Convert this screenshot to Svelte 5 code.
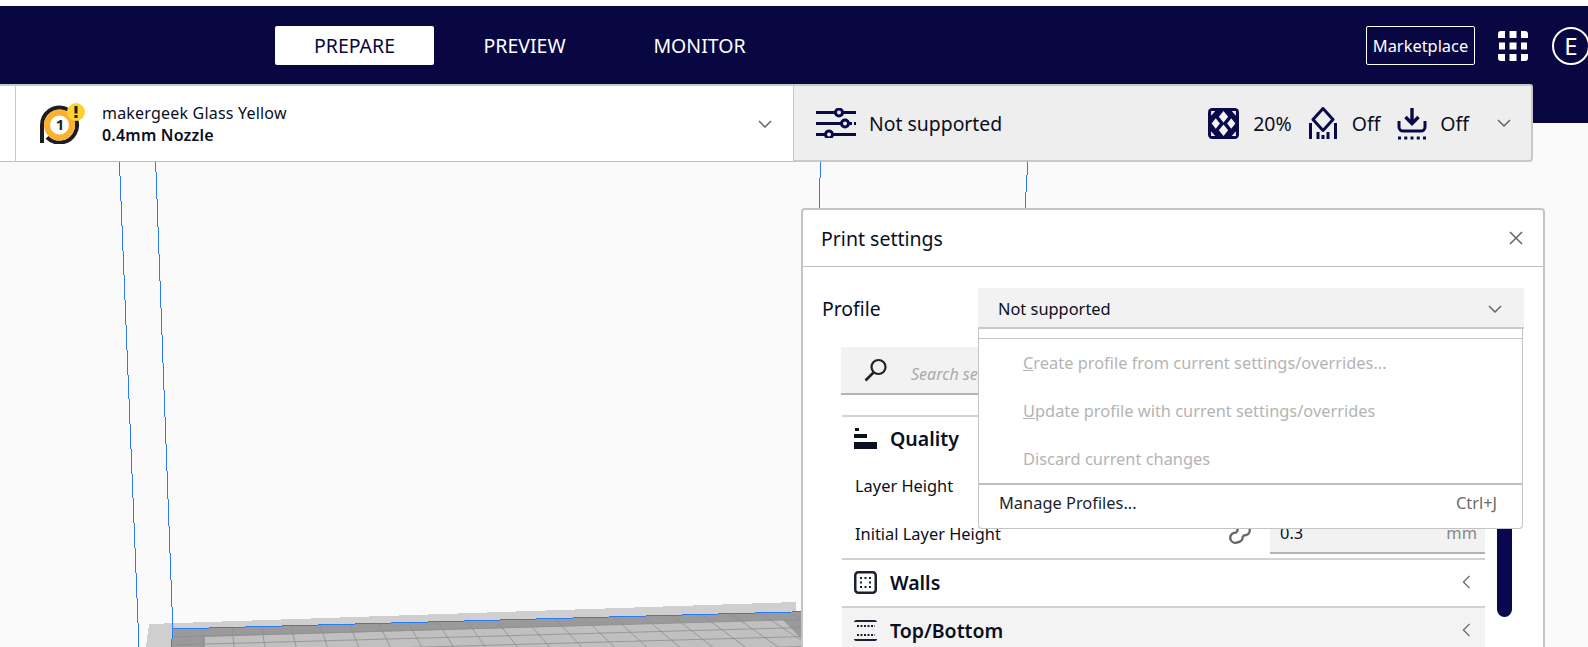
<script>
  const slope = -0.0277;
  const edgeY = (x) => 629 + (x - 172) * slope;
  const cols = Array.from({ length: 22 }, (_, i) => 203 + i * 29.3);
  const rows = [8, 16, 25, 35, 46, 58];
  const colPath = cols
    .map((x) => {
      const y = edgeY(x);
      const dy = 60;
      return `M${x} ${y}L${x + (x - 200) * 0.0027 * dy} ${y + dy}`;
    })
    .join('');
  const rowPath = rows
    .map((o) => `M172 ${629 + o}L830 ${629 + o + 658 * slope}`)
    .join('');
  const categories = [
    { name: 'Walls', shaded: false },
    { name: 'Top/Bottom', shaded: true }
  ];
</script>

<div class="app">
  <svg class="scene" viewBox="0 0 1588 647" width="1588" height="647" aria-hidden="true">
    <polygon class="rim" points="149,624 796,602 796,612 172,629 172,647 146,647" />
    <polygon class="band" points="172,629 810,611.5 810,647 172,647" />
    <polygon class="plate" points="205,637 783,620 812,650 205,650" />
    <path class="grid" d={rowPath} />
    <path class="grid" d={colPath} />
    <path class="ray" d="M119.4 161L139 647M155.6 161L172.8 629L171.4 647M172.8 629L810 611.5M820.6 161L819 209M1027.8 161L1025 209" />
  </svg>

  <header class="nav">
    <div class="tabs">
      <span class="tab active">PREPARE</span>
      <span class="tab">PREVIEW</span>
      <span class="tab last">MONITOR</span>
    </div>
    <div class="nav-right">
      <span class="market">Marketplace</span>
      <svg class="apps" viewBox="0 0 30 30" width="30" height="30" fill="#fff" aria-hidden="true">
        <path d="M3 0h4v7H0V3a3 3 0 0 1 3-3zM11.500 0h7v7h-7zM23 0h4a3 3 0 0 1 3 3v4h-7zM1 11.500h6v7H1zM11.500 11.500h7v7h-7zM23 11.500h6v7h-6zM0 23h7v7H3a3 3 0 0 1-3-3zM11.500 23h7v7h-7zM23 23h7v4a3 3 0 0 1-3 3h-4z" />
      </svg>
      <span class="avatar">E</span>
    </div>
  </header>

  <div class="toolbar">
    <div class="material">
      <div class="mat-inner">
        <div class="extruder">
          <svg viewBox="0 0 46 41" width="46" height="41" aria-hidden="true">
            <path d="M2 40V22a17.500 17.500 0 1 1 5 12.300" fill="none" stroke="#1d1d1d" stroke-width="4" />
            <circle cx="19.500" cy="22" r="12.500" fill="#fff" stroke="#fbb130" stroke-width="6" />
            <circle cx="36" cy="9" r="9" fill="#fed330" />
            <rect x="34.500" y="3" width="3" height="7.500" fill="#1d1d1d" />
            <rect x="34.500" y="12" width="3" height="3" fill="#1d1d1d" />
          </svg>
          <span class="ext-num">1</span>
        </div>
        <div class="mat-text">
          <span>makergeek Glass Yellow</span>
          <strong>0.4mm Nozzle</strong>
        </div>
        <svg class="chev" viewBox="0 0 14 8" width="14" height="8" aria-hidden="true"><path d="M1 1l6 6 6-6" /></svg>
      </div>
    </div>
    <div class="print">
      <svg class="sliders" viewBox="0 0 40 30" width="40" height="30" aria-hidden="true">
        <path d="M0 4.500h19M27 4.500h13M0 15.500h25M33 15.500h3M38 15.500h2M0 26.500h9M17 26.500h23" />
        <circle cx="23" cy="4.500" r="3.500" /><circle cx="29" cy="15.500" r="3.500" /><circle cx="13" cy="26.500" r="3.500" />
      </svg>
      <span class="print-name">Not supported</span>
      <svg class="ic-infill" viewBox="0 0 30 30" width="31" height="31" aria-hidden="true">
        <rect width="30" height="30" rx="4" fill="#0a0a4a" />
        <path fill="#f2f2f5" d="M15 3l4.500 5.500L15 14l-4.500-5.500zM15 16l4.500 5.500L15 27l-4.500-5.500zM7.500 10l4 5-4 5-4-5zM22.500 10l4 5-4 5-4-5zM3 3h4L3 7.500zM27 3v4.500L23 3zM3 27v-4.500L7 27zM27 27h-4l4-4.500z" />
      </svg>
      <span class="stat s1">20%</span>
      <svg class="ic-support" viewBox="0 0 30 33" width="30" height="33" aria-hidden="true">
        <path d="M15 1.500L25 12.500 15 23.500 5 12.500z" fill="none" stroke="#0a0a4a" stroke-width="3" stroke-linejoin="round" />
        <path d="M2.500 32V16M27.500 32V16M10 32v-7M20 32v-7M15 32v-4" fill="none" stroke="#0a0a4a" stroke-width="3" />
      </svg>
      <span class="stat s2">Off</span>
      <svg class="ic-adhesion" viewBox="0 0 30 33" width="30" height="33" aria-hidden="true">
        <path d="M15 1v15M8.500 10l6.500 6.500 6.500-6.500" fill="none" stroke="#0a0a4a" stroke-width="3.400" />
        <path d="M2 14v6a4 4 0 0 0 4 4h18a4 4 0 0 0 4-4v-6" fill="none" stroke="#0a0a4a" stroke-width="3" />
        <path d="M1 31h28" fill="none" stroke="#0a0a4a" stroke-width="3" stroke-dasharray="3 3.250" />
      </svg>
      <span class="stat s3">Off</span>
      <svg class="chev print-chev" viewBox="0 0 14 8" width="14" height="8" aria-hidden="true"><path d="M1 1l6 6 6-6" /></svg>
    </div>
  </div>

  <section class="panel">
    <div class="panel-head">
      <span>Print settings</span>
      <svg class="close" viewBox="0 0 14 14" width="14" height="14" aria-hidden="true"><path d="M1 1l12 12M13 1L1 13" /></svg>
    </div>

    <div class="profile-row">
      <span class="profile-label">Profile</span>
      <div class="combo">
        <span>Not supported</span>
        <svg class="chev combo-chev" viewBox="0 0 14 8" width="14" height="8" aria-hidden="true"><path d="M1 1l6 6 6-6" /></svg>
      </div>
    </div>

    <div class="search">
      <svg viewBox="0 0 26 26" width="26" height="26" aria-hidden="true">
        <circle cx="15.500" cy="10" r="7" fill="none" stroke="#222" stroke-width="2.200" />
        <path d="M10.500 15.500L2.500 23.500" stroke="#222" stroke-width="2.600" />
      </svg>
      <span>Search settings</span>
    </div>

    <div class="scroller">
      <div class="list">
        <div class="cat first">
          <svg viewBox="0 0 23 21" width="23" height="21" aria-hidden="true">
            <path fill="#0b1020" d="M1 0h4v3H1zM0 6h13v4H0zM0 14h23v7H0z" />
          </svg>
          <strong>Quality</strong>
        </div>
        <div class="row"><span>Layer Height</span></div>
        <div class="row">
          <span>Initial Layer Height</span>
          <svg class="link" viewBox="0 0 24 20" width="24" height="20" aria-hidden="true">
            <path d="M10 7.500H6.500a5 5 0 0 0 0 10H9a5 5 0 0 0 5-5M14 12.500h3.500a5 5 0 0 0 0-10H15a5 5 0 0 0-5 5" transform="rotate(-14 12 10)" />
          </svg>
          <div class="field"><span>0.3</span><span class="unit">mm</span></div>
        </div>
        {#each categories as cat, i}
          <div class="cat" class:shaded={cat.shaded}>
            {#if i === 0}
              <svg viewBox="0 0 23 23" width="23" height="23" aria-hidden="true">
                <rect x="1.250" y="1.250" width="20.500" height="20.500" rx="3" fill="none" stroke="#1a2030" stroke-width="2.500" />
                <path d="M6 7h2M10.500 7h2M15 7h2M6 11.500h2M15 11.500h2M6 16h2M10.500 16h2M15 16h2" stroke="#1a2030" stroke-width="2" />
              </svg>
            {:else}
              <svg viewBox="0 0 23 23" width="23" height="23" aria-hidden="true">
                <path d="M0 3a3 2 0 0 1 3-2h17a3 2 0 0 1 3 2zM0 20h23a3 2 0 0 1-3 2H3a3 2 0 0 1-3-2z" fill="#1a2030" />
                <path d="M3 7h18M3 16h18" stroke="#1a2030" stroke-width="2" stroke-dasharray="2 1.500" />
              </svg>
            {/if}
            <strong>{cat.name}</strong>
            <svg class="cat-chev" viewBox="0 0 9 16" width="9" height="14" aria-hidden="true"><path d="M8 1L1 8l7 7" /></svg>
          </div>
        {/each}
      </div>
      <div class="thumb"></div>
    </div>

    <div class="menu">
      <div class="menu-top"></div>
      <div class="item off first-item"><span><u>C</u>reate profile from current settings/overrides...</span></div>
      <div class="item off"><span><u>U</u>pdate profile with current settings/overrides</span></div>
      <div class="item off"><span>Discard current changes</span></div>
      <div class="manage"><span>Manage Profiles...</span><span class="shortcut">Ctrl+J</span></div>
    </div>
  </section>
</div>

<style>
  :global(body) {
    margin: 0;
  }
  .app {
    position: relative;
    width: 1588px;
    height: 647px;
    overflow: hidden;
    padding-top: 6px;
    box-sizing: border-box;
    background: linear-gradient(#fff 0 6px, #fafafa 6px);
    font-family: "Noto Sans", sans-serif;
    color: #0a0f1e;
  }
  .scene {
    position: absolute;
    inset: 0;
  }
  .rim { fill: #cfcfcf; shape-rendering: crispEdges; }
  .band { fill: #9a9a9a; }
  .plate { fill: #c0c0c0; }
  .grid { fill: none; stroke: #8f8f8f; stroke-width: 1; opacity: 0.8; }
  .ray { fill: none; stroke: #2a7cf0; stroke-width: 1; shape-rendering: crispEdges; }

  .nav {
    position: relative;
    height: 78px;
    background: #080742;
    display: flex;
    align-items: flex-start;
    justify-content: space-between;
    padding-top: 20px;
    box-sizing: border-box;
  }
  .tabs {
    display: flex;
    margin-left: 275px;
    gap: 11px;
  }
  .tab {
    width: 159px;
    height: 39px;
    display: flex;
    align-items: center;
    justify-content: center;
    font-size: 19.500px;
    color: #fff;
    border-radius: 2px;
  }
  .tab.last {
    margin-left: 5px;
  }
  .tab.active {
    background: #fff;
    color: #080742;
  }
  .nav-right {
    display: flex;
    align-items: center;
    height: 39px;
  }
  .market {
    width: 109px;
    height: 39px;
    box-sizing: border-box;
    border: 1px solid #fff;
    border-radius: 2px;
    display: flex;
    align-items: center;
    justify-content: center;
    font-size: 16.400px;
    color: #fff;
  }
  .apps {
    margin-left: 23px;
  }
  .avatar {
    margin-left: 24px;
    margin-right: -2px;
    width: 38px;
    height: 38px;
    box-sizing: border-box;
    border: 2px solid #fff;
    border-radius: 50%;
    display: flex;
    align-items: center;
    justify-content: center;
    color: #fff;
    font-size: 24px;
  }

  .toolbar {
    position: relative;
    display: flex;
    height: 78px;
  }
  .toolbar::after {
    content: "";
    position: absolute;
    left: 1500px;
    right: 0;
    top: 0;
    height: 39px;
    background: #080742;
    z-index: 0;
  }
  .material {
    width: 793px;
    box-sizing: border-box;
    background: #fff;
    border-top: 2px solid #c8c8c8;
    border-bottom: 1px solid #c0c0c0;
    padding-left: 15px;
  }
  .mat-inner {
    height: 100%;
    border-left: 1px solid #c8c8c8;
    display: flex;
    align-items: center;
    padding-left: 24px;
    padding-right: 21px;
  }
  .extruder {
    position: relative;
    width: 46px;
    height: 41px;
    margin-right: 16px;
  }
  .extruder svg {
    display: block;
  }
  .ext-num {
    position: absolute;
    left: 14px;
    top: 11px;
    width: 12px;
    text-align: center;
    font-size: 15px;
    font-weight: 700;
    line-height: 20px;
    color: #1d1d1d;
  }
  .mat-text {
    display: flex;
    flex-direction: column;
    flex: 1;
    font-size: 16px;
    letter-spacing: 0.2px;
    line-height: 22px;
    margin-top: 1px;
  }
  .mat-text strong {
    font-weight: 600;
  }
  .chev path, .close path, .cat-chev path {
    fill: none;
    stroke: #666;
    stroke-width: 1.500;
  }
  .print {
    position: relative;
    z-index: 1;
    width: 740px;
    box-sizing: border-box;
    background: #eeeeee;
    border: 2px solid #c8c8c8;
    border-left: 1px solid #c8c8c8;
    border-radius: 0 3px 4px 0;
    display: flex;
    align-items: center;
    padding-left: 22px;
  }
  .sliders path {
    fill: none;
    stroke: #0a0a4a;
    stroke-width: 3;
  }
  .sliders circle {
    fill: #eee;
    stroke: #0a0a4a;
    stroke-width: 3;
  }
  .print-name {
    margin-left: 13px;
    font-size: 19.400px;
    flex: 1;
  }
  .stat {
    font-size: 19.500px;
  }
  .s1 { margin-left: 14px; }
  .ic-support { margin-left: 16px; }
  .s2 { margin-left: 14px; }
  .ic-adhesion { margin-left: 17px; }
  .s3 { margin-left: 13px; }
  .print-chev { margin-left: 28px; margin-right: 20px; }

  .panel {
    position: relative;
    margin-left: 801px;
    margin-top: 46px;
    width: 744px;
    height: 470px;
    box-sizing: border-box;
    background: #fff;
    border: 2px solid #c4c4c4;
    border-radius: 4px;
  }
  .panel-head {
    height: 57px;
    box-sizing: border-box;
    border-bottom: 1px solid #c0c0c0;
    display: flex;
    align-items: center;
    justify-content: space-between;
    padding: 0 20px 0 18px;
    font-size: 19.500px;
  }
  .close {
    margin-top: -1px;
  }
  .profile-row {
    display: flex;
    height: 41px;
    margin-top: 21px;
    padding-left: 19px;
    padding-right: 19px;
  }
  .profile-label {
    width: 156px;
    height: 41px;
    font-size: 19.400px;
    line-height: 42px;
  }
  .combo {
    flex: 1;
    height: 41px;
    box-sizing: border-box;
    background: #f2f2f2;
    border-bottom: 2px solid #c8c8c8;
    display: flex;
    align-items: center;
    justify-content: space-between;
    padding: 2px 22px 0 20px;
    font-size: 16.400px;
  }
  .search {
    margin: 18px 58px 0 38px;
    height: 48px;
    box-sizing: border-box;
    background: #f2f2f2;
    border-bottom: 2px solid #b4b4b4;
    display: flex;
    align-items: center;
    padding-left: 22px;
    font-size: 16px;
    font-style: italic;
    color: #aaa;
  }
  .search span {
    margin-left: 22px;
    margin-top: 8px;
  }
  .scroller {
    display: flex;
    margin-top: 20px;
    padding-left: 39px;
  }
  .list {
    width: 643px;
  }
  .cat {
    height: 48px;
    box-sizing: border-box;
    border-top: 2px solid #d2d2d2;
    display: flex;
    align-items: center;
    padding: 0 14px 2px 12px;
  }
  .cat.first {
    height: 47px;
  }
  .cat.shaded {
    background: #f3f3f3;
  }
  .cat strong {
    margin-left: 13px;
    font-size: 19.500px;
    font-weight: 600;
    flex: 1;
  }
  .cat.first svg {
    margin-top: -1px;
  }
  .row {
    height: 48px;
    display: flex;
    align-items: center;
    padding-left: 13px;
    font-size: 16.400px;
  }
  .row > span {
    flex: 1;
    margin-top: -2px;
  }
  .link {
    margin-right: 18px;
  }
  .link path {
    fill: none;
    stroke: #666;
    stroke-width: 2.400;
  }
  .field {
    width: 215px;
    height: 44px;
    box-sizing: border-box;
    background: #f2f2f2;
    border-bottom: 2px solid #b4b4b4;
    margin-top: -4px;
    display: flex;
    align-items: center;
    justify-content: space-between;
    padding: 2px 8px 0 10px;
  }
  .unit {
    color: #888;
  }
  .thumb {
    margin-left: 12px;
    width: 15px;
    height: 200px;
    margin-top: 2px;
    background: #080750;
    border-radius: 0 0 8px 8px;
  }
  .menu {
    position: absolute;
    left: 175px;
    top: 119px;
    width: 545px;
    height: 200px;
    box-sizing: border-box;
    background: #fff;
    border: 1.500px solid #c4c4c4;
    border-top: 0;
    border-radius: 0 0 4px 4px;
    font-size: 16.400px;
  }
  .menu-top {
    height: 9px;
    border-bottom: 1px solid #c4c4c4;
  }
  .item {
    height: 48px;
    display: flex;
    align-items: center;
    padding-left: 44px;
  }
  .item.first-item {
    margin-top: -1px;
  }
  .item.off {
    color: #b4b4b4;
  }
  .manage {
    margin-top: 1px;
    height: 44px;
    box-sizing: border-box;
    border-top: 2px solid #c0c0c0;
    display: flex;
    align-items: center;
    justify-content: space-between;
    padding: 0 25px 7px 20px;
    color: #1a1f2e;
  }
  .shortcut {
    color: #6a6a6a;
  }
</style>
